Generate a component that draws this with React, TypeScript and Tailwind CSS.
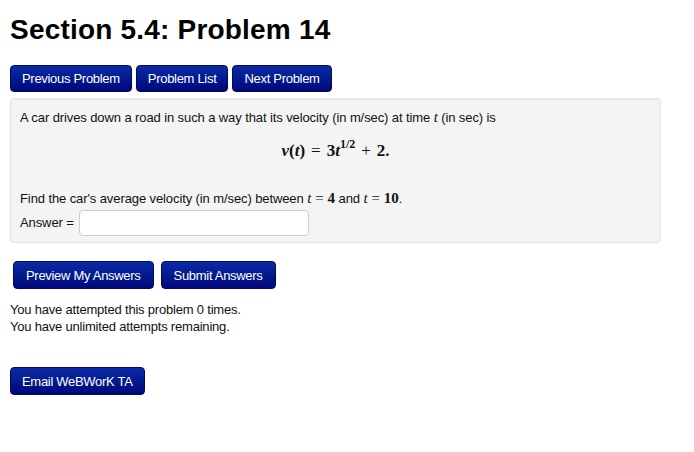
export default function App() {
  const btn =
    "h-[27px] px-[11px] rounded-[4px] border border-[#000a5c] bg-gradient-to-b from-[#0b2aa6] to-[#00077a] text-white text-[13px] tracking-[-0.3px] leading-none";
  const m = "font-['Liberation_Serif',serif] italic text-[15px]";
  return (
    <div className="min-h-[452px] bg-white pl-[10px] pr-[33px] font-['Liberation_Sans',Arial,sans-serif] text-[#111]">
      <h1 className="pt-[14px] text-[28px] leading-[32px] font-bold tracking-[0.2px] text-black">Section 5.4: Problem 14</h1>

      <div className="mt-[19px] flex gap-[4px]">
        <button className={btn}>Previous Problem</button>
        <button className={btn}>Problem List</button>
        <button className={btn}>Next Problem</button>
      </div>

      <div className="mt-[6px] h-[145px] rounded-[4px] border border-[#e3e3e3] bg-[#f4f4f4] px-[9px] pt-[9px] text-[13px] leading-[18px] tracking-[-0.1px] shadow-[inset_0_1px_1px_rgba(0,0,0,0.05)]">
        <p>
          A car drives down a road in such a way that its velocity (in m/sec) at time <span className={m}>t</span> (in sec) is
        </p>
        <div className="mt-[9px] h-[30px] flex items-center justify-center font-['Liberation_Serif',serif] font-bold text-[17px] tracking-normal">
          <span className="italic">v</span>(<span className="italic">t</span>)<span className="mx-[6px] font-normal">=</span>3<span className="italic">t</span>
          <sup className="text-[12px] -top-[7px]">1/2</sup>
          <span className="mx-[6px] font-normal">+</span>2.
        </div>
        <p className="mt-[23px]">
          Find the car's average velocity (in m/sec) between <span className={m}>t</span>
          <span className="font-['Liberation_Serif',serif] text-[15px] mx-[4px]">=</span>
          <span className="font-['Liberation_Serif',serif] font-bold text-[15px]">4</span> and{" "}
          <span className={m}>t</span>
          <span className="font-['Liberation_Serif',serif] text-[15px] mx-[4px]">=</span>
          <span className="font-['Liberation_Serif',serif] font-bold text-[15px]">10</span>.
        </p>
        <div className="mt-[2px] flex items-center gap-[5px]">
          <span>Answer =</span>
          <input className="h-[26px] w-[230px] rounded-[4px] border border-[#cccccc] bg-white px-[6px]" />
        </div>
      </div>

      <div className="mt-[18px] pl-[3px] flex gap-[7px]">
        <button className={btn + " h-[28px] px-[12px]"}>Preview My Answers</button>
        <button className={btn + " h-[28px] px-[12px]"}>Submit Answers</button>
      </div>

      <div className="mt-[12px] text-[13px] leading-[17px] tracking-[-0.2px]">
        <p>You have attempted this problem 0 times.</p>
        <p>You have unlimited attempts remaining.</p>
      </div>

      <div className="mt-[32px]">
        <button className={btn + " h-[28px]"}>Email WeBWorK TA</button>
      </div>
    </div>
  );
}
